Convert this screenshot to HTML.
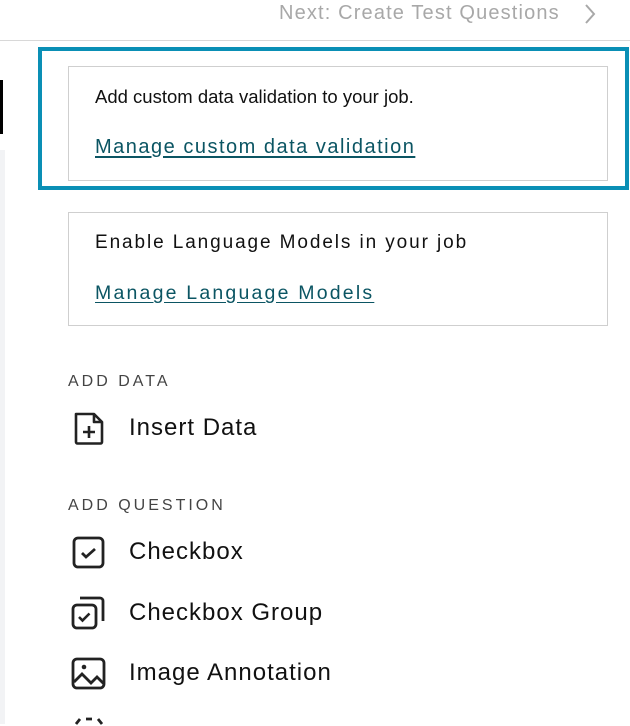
<!DOCTYPE html>
<html><head><style>
body{margin:0;width:630px;height:724px;overflow:hidden;background:#fff;font-family:"Liberation Sans",sans-serif;position:relative;color:#111}
.a{position:absolute}
.box{position:absolute;left:68px;width:540px;border:1px solid #cfcfcf;box-sizing:border-box}
.t{position:absolute;left:26px;font-size:19px;white-space:nowrap}
.l{position:absolute;left:26px;font-size:20px;letter-spacing:1.5px;color:#0b5563;text-decoration:underline;text-underline-offset:3px;white-space:nowrap}
.h{position:absolute;left:68px;font-size:16px;letter-spacing:3px;color:#444}
.it{position:absolute;left:129px;font-size:24px;letter-spacing:1px;white-space:nowrap}
svg{position:absolute}
</style></head><body>
<div class="a" style="left:0;top:150px;width:5px;height:574px;background:#f2f3f5"></div>
<div class="a" style="left:0;top:80px;width:3px;height:54px;background:#000"></div>
<div class="a" style="left:279px;top:2px;font-size:20px;letter-spacing:1.15px;color:#a8a8a8;white-space:nowrap">Next: Create Test Questions</div>
<svg style="left:582px;top:3px" width="16" height="22" viewBox="0 0 16 22"><path d="M4 2l8 9-8 9" fill="none" stroke="#a8a8a8" stroke-width="2"/></svg>
<div class="a" style="left:0;top:40px;width:630px;height:1px;background:#d8d8d8"></div>
<div class="a" style="left:38px;top:47px;width:591px;height:143px;border:4px solid #0a8fb5;box-sizing:border-box"></div>
<div class="box" style="top:66px;height:115px"><div class="t" style="top:19px;font-size:18.5px">Add custom data validation to your job.</div><div class="l" style="top:69px">Manage custom data validation</div></div>
<div class="box" style="top:212px;height:114px"><div class="t" style="top:19px;letter-spacing:1.9px">Enable Language Models in your job</div><div class="l" style="top:69px;letter-spacing:2.2px;font-size:19.5px">Manage Language Models</div></div>
<div class="h" style="top:373px">ADD DATA</div>
<svg style="left:72px;top:410px" width="34" height="36" viewBox="0 0 34 36"><path d="M4 4h18l8 8v20a1.5 1.5 0 0 1-1.5 1.5h-23A1.5 1.5 0 0 1 4 32z M22 4v8h8" fill="none" stroke="#222" stroke-width="2.6" stroke-linejoin="round"/><path d="M17 16v12M11 22h12" stroke="#222" stroke-width="2.6"/></svg>
<div class="it" style="top:414px">Insert Data</div>
<div class="h" style="top:497px">ADD QUESTION</div>
<svg style="left:72px;top:536px" width="34" height="34" viewBox="0 0 34 34"><rect x="2" y="2" width="29" height="29" rx="4" fill="none" stroke="#222" stroke-width="2.8"/><path d="M10 17l4 4 9-8" fill="none" stroke="#222" stroke-width="2.8"/></svg>
<div class="it" style="top:538px">Checkbox</div>
<svg style="left:71px;top:596px" width="36" height="36" viewBox="0 0 36 36"><rect x="2" y="9" width="23" height="23" rx="4" fill="none" stroke="#222" stroke-width="2.8"/><path d="M9 2h20a3 3 0 0 1 3 3v20" fill="none" stroke="#222" stroke-width="2.8"/><path d="M8 21l3.5 3.5 7-7" fill="none" stroke="#222" stroke-width="2.6"/></svg>
<div class="it" style="top:599px">Checkbox Group</div>
<svg style="left:71px;top:657px" width="36" height="34" viewBox="0 0 36 34"><rect x="2" y="2" width="31" height="29" rx="4" fill="none" stroke="#222" stroke-width="2.8"/><circle cx="13" cy="10" r="2.3" fill="#222"/><path d="M3 25l8-8 9 9 6-6 7 7" fill="none" stroke="#222" stroke-width="2.8"/></svg>
<div class="it" style="top:659px">Image Annotation</div>
<svg style="left:72px;top:716px" width="34" height="10" viewBox="0 0 34 10"><path d="M4 8l4-5M14 3h6M26 3l4 5" stroke="#222" stroke-width="2.8"/></svg>
</body></html>
